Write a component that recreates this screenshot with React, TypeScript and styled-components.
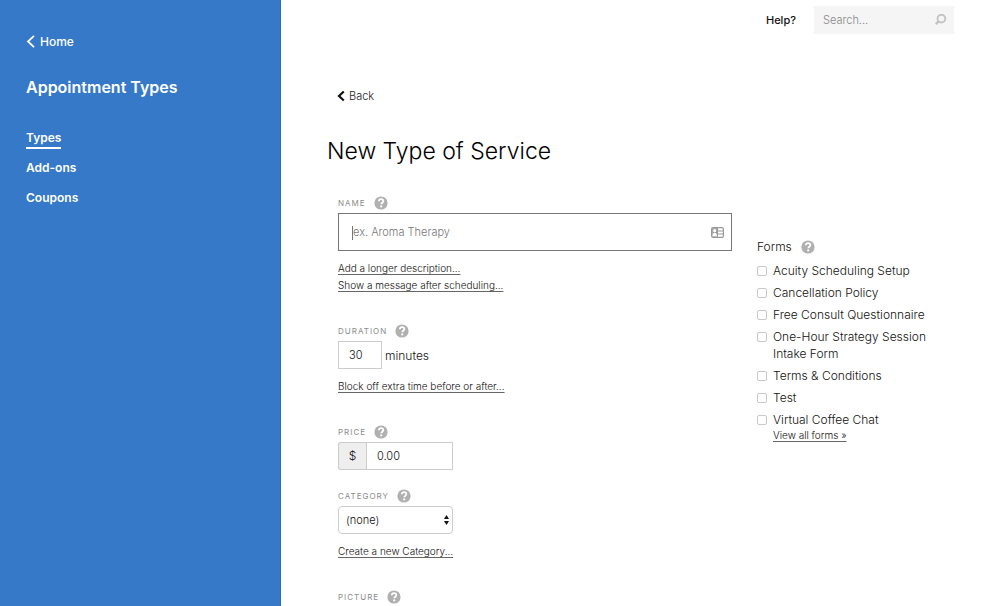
import React, { useId } from "react";
import styled, { createGlobalStyle } from "styled-components";

const Global = createGlobalStyle`
  *, *::before, *::after { box-sizing: border-box; }
  body {
    margin: 0;
    background: #fff;
    color: #111;
    font-family: Inter, "Liberation Sans", sans-serif;
    font-size: 12px;
    font-weight: 300;
    line-height: 17px;
  }
  input, select, button { font: inherit; color: inherit; }
`;

const Page = styled.div`
  display: flex;
  min-height: 100vh;
`;

const Sidebar = styled.aside`
  flex: 0 0 281px;
  padding: 33px 26px;
  background: #3579c8;
  border-right: 1px solid #2470c4;
  color: #fff;
`;

const HomeLink = styled.a`
  display: inline-flex;
  align-items: center;
  gap: 5px;
  color: #fff;
  font-size: 12px;
  font-weight: 500;
  text-decoration: none;
`;

const SidebarTitle = styled.h2`
  margin: 23px 0 30px;
  font-size: 16px;
  font-weight: 600;
  line-height: 24px;
`;

const Nav = styled.nav`
  display: flex;
  flex-direction: column;
  align-items: flex-start;
  gap: 10px;
`;

const NavLink = styled.a<{ $active?: boolean }>`
  height: 20px;
  border-bottom: 2px solid ${(p) => (p.$active ? "#fff" : "transparent")};
  color: #fff;
  font-size: 12px;
  font-weight: 600;
  line-height: 18px;
  text-decoration: none;
`;

const Main = styled.main`
  flex: 1;
  min-width: 0;
  padding: 6px 46px 0;
`;

const TopBar = styled.header`
  display: flex;
  justify-content: flex-end;
  align-items: center;
  gap: 18px;
`;

const HelpLink = styled.a`
  color: #111;
  font-weight: 500;
  font-size: 11px;
  text-decoration: none;
`;

const SearchBox = styled.div`
  display: flex;
  align-items: center;
  width: 140px;
  height: 28px;
  padding: 0 7px 0 9px;
  background: #f5f5f5;
`;

const SearchInput = styled.input`
  flex: 1;
  min-width: 0;
  padding: 0;
  border: 0;
  background: transparent;
  font-size: 11px;
  outline: none;
  &::placeholder { color: #888; opacity: 1; }
`;

const BackLink = styled.a`
  display: inline-flex;
  align-items: center;
  gap: 4px;
  margin: 54px 0 0 10px;
  color: #222;
  font-size: 11px;
  text-decoration: none;
`;

const Title = styled.h1`
  margin: 30px 0 29px;
  color: #000;
  font-size: 23px;
  font-weight: 300;
  line-height: 30px;
`;

const Form = styled.form`
  display: flex;
  gap: 25px;
  padding-left: 11px;
`;

const Fields = styled.div`
  flex: 1;
  min-width: 0;
`;

const Field = styled.section<{ $tight?: boolean }>`
  margin-bottom: ${(p) => (p.$tight ? 18 : 29)}px;
  &:last-child { margin-bottom: 0; }
`;

const LabelRow = styled.div`
  display: flex;
  align-items: center;
  gap: 8px;
  height: 16px;
  margin-bottom: 2px;
  ${Field}:last-child & { margin-bottom: 0; }
`;

const Label = styled.label`
  color: #8c8c8c;
  font-size: 8px;
  font-weight: 400;
  letter-spacing: 1px;
  line-height: 16px;
  text-transform: uppercase;
`;

const HelpButton = styled.button`
  display: block;
  width: 14px;
  height: 14px;
  padding: 0;
  border: 0;
  background: none;
  svg { display: block; }
`;

const NameBox = styled.div`
  position: relative;
  display: flex;
  align-items: center;
  height: 38px;
  padding: 0 7px 0 14px;
  border: 1px solid #777;
  &::before {
    content: "";
    position: absolute;
    left: 13px;
    top: 12px;
    width: 1px;
    height: 14px;
    background: #777;
  }
`;

const NameInput = styled.input`
  flex: 1;
  min-width: 0;
  padding: 0;
  border: 0;
  background: transparent;
  font-size: 11px;
  outline: none;
  &::placeholder { color: #777; opacity: 1; }
`;

const Links = styled.div`
  display: flex;
  flex-direction: column;
  align-items: flex-start;
  margin-top: 9px;
`;

const TextLink = styled.a`
  color: #111;
  font-size: 10px;
  line-height: 17px;
  text-decoration: underline;
  text-decoration-color: #666;
  text-underline-offset: 2px;
`;

const Row = styled.div`
  display: flex;
  align-items: center;
`;

const SmallInput = styled.input<{ $width: number }>`
  width: ${(p) => p.$width}px;
  height: 28px;
  padding: 0 10px;
  border: 1px solid #ccc;
  background: #fff;
  font-size: 11px;
`;

const Unit = styled.span`
  margin-left: 3px;
`;

const Currency = styled.span`
  width: 28px;
  height: 28px;
  border: 1px solid #ccc;
  border-right: 0;
  border-radius: 3px 0 0 3px;
  background: #eee;
  line-height: 26px;
  text-align: center;
`;

const SelectBox = styled.div`
  display: grid;
  align-items: center;
  width: 115px;
  svg {
    grid-area: 1 / 1;
    justify-self: end;
    margin-right: 4px;
    pointer-events: none;
  }
`;

const Select = styled.select`
  grid-area: 1 / 1;
  width: 100%;
  height: 28px;
  padding: 0 7px;
  border: 1px solid #ccc;
  border-radius: 4px;
  background: #fff;
  font-size: 11px;
  appearance: none;
`;

const FormsPanel = styled.aside`
  flex: 0 0 197px;
  padding: 43px 20px 0 0;
`;

const FormsHeading = styled.div`
  display: flex;
  align-items: center;
  gap: 9px;
  margin-bottom: 7px;
`;

const FormsTitle = styled.h3`
  margin: 0;
  font-size: 12px;
  font-weight: 300;
`;

const CheckList = styled.ul`
  display: flex;
  flex-direction: column;
  gap: 5px;
  margin: 0;
  padding: 0;
  list-style: none;
`;

const CheckLabel = styled.label`
  display: flex;
  align-items: flex-start;
  gap: 6px;
`;

const Checkbox = styled.input`
  flex: none;
  width: 10px;
  height: 10px;
  margin: 4px 0 0;
  border: 1px solid #c8c8c8;
  border-radius: 2px;
  background: #fff;
  appearance: none;
  &:checked { background: #3579c8; }
`;

const ViewAll = styled.div`
  padding-left: 16px;
  line-height: 14px;
  ${TextLink} { line-height: 14px; }
`;

function Help({ topic }: { topic: string }) {
  return (
    <HelpButton type="button" aria-label={`Help about ${topic}`}>
      <svg width="14" height="14" viewBox="0 0 14 14" aria-hidden="true">
        <circle cx="7" cy="7" r="6.6" fill="#b0b0b0" />
        <path
          d="M4.8 5.3C4.9 3.9 5.8 3.2 7 3.2s2.3.8 2.3 1.9c0 1.5-2 1.7-2 3.2"
          fill="none"
          stroke="#fff"
          strokeWidth="1.8"
        />
        <circle cx="7.2" cy="10.4" r="1.1" fill="#fff" />
      </svg>
    </HelpButton>
  );
}

interface FieldGroupProps {
  label: string;
  tight?: boolean;
  links?: string[];
  children?: (id: string) => React.ReactNode;
}

function FieldGroup({ label, tight, links, children }: FieldGroupProps) {
  const id = useId();
  return (
    <Field $tight={tight}>
      <LabelRow>
        <Label htmlFor={children ? id : undefined}>{label}</Label>
        <Help topic={label} />
      </LabelRow>
      {children?.(id)}
      {links && (
        <Links>
          {links.map((text) => (
            <TextLink key={text} href="#">{text}</TextLink>
          ))}
        </Links>
      )}
    </Field>
  );
}

const forms = [
  "Acuity Scheduling Setup",
  "Cancellation Policy",
  "Free Consult Questionnaire",
  "One-Hour Strategy Session Intake Form",
  "Terms & Conditions",
  "Test",
  "Virtual Coffee Chat",
];

export default function App() {
  return (
    <Page>
      <Global />
      <Sidebar>
        <HomeLink href="#">
          <svg width="9" height="13" viewBox="0 0 9 13" fill="none" stroke="#fff" strokeWidth="1.8" aria-hidden="true">
            <path d="M8 .8 2 6.5l6 5.7" />
          </svg>
          Home
        </HomeLink>
        <SidebarTitle>Appointment Types</SidebarTitle>
        <Nav>
          <NavLink href="#" $active>Types</NavLink>
          <NavLink href="#">Add-ons</NavLink>
          <NavLink href="#">Coupons</NavLink>
        </Nav>
      </Sidebar>
      <Main>
        <TopBar>
          <HelpLink href="#">Help?</HelpLink>
          <SearchBox>
            <SearchInput type="text" placeholder="Search..." aria-label="Search" />
            <svg width="12" height="12" viewBox="0 0 12 12" fill="none" stroke="#c4c4c4" aria-hidden="true">
              <circle cx="6.4" cy="4.6" r="3.9" strokeWidth="1.9" />
              <path d="M3.8 7.2 .9 10.1" strokeWidth="2.6" />
            </svg>
          </SearchBox>
        </TopBar>
        <BackLink href="#">
          <svg width="8" height="11" viewBox="0 0 8 11" fill="none" stroke="#111" strokeWidth="2.2" aria-hidden="true">
            <path d="M6.8 .5 2 5l4.8 4.5" />
          </svg>
          Back
        </BackLink>
        <Title>New Type of Service</Title>
        <Form>
          <Fields>
            <FieldGroup label="Name" links={["Add a longer description...", "Show a message after scheduling..."]}>
              {(id) => (
                <NameBox>
                  <NameInput id={id} type="text" placeholder="ex. Aroma Therapy" />
                  <svg width="13" height="11" viewBox="0 0 13 11" fill="none" stroke="#999" aria-hidden="true">
                    <rect x=".6" y=".6" width="11.8" height="9.8" rx="1.4" strokeWidth="1.2" />
                    <path d="M6.5 1v9M6.5 4h6M6.5 7h6" />
                    <path d="M1.2 1.2h5v8.6h-5z" fill="#999" stroke="none" />
                    <circle cx="3.7" cy="3.7" r="1.6" fill="#fff" stroke="none" />
                    <path d="M1.4 9.2c0-4.6 4.6-4.6 4.6 0z" fill="#fff" stroke="none" />
                  </svg>
                </NameBox>
              )}
            </FieldGroup>
            <FieldGroup label="Duration" links={["Block off extra time before or after..."]}>
              {(id) => (
                <Row>
                  <SmallInput id={id} type="text" defaultValue="30" $width={44} />
                  <Unit>minutes</Unit>
                </Row>
              )}
            </FieldGroup>
            <FieldGroup label="Price" tight>
              {(id) => (
                <Row>
                  <Currency>$</Currency>
                  <SmallInput id={id} type="text" defaultValue="0.00" $width={87} />
                </Row>
              )}
            </FieldGroup>
            <FieldGroup label="Category" links={["Create a new Category..."]}>
              {(id) => (
                <SelectBox>
                  <Select id={id} defaultValue="none">
                    <option value="none">(none)</option>
                  </Select>
                  <svg width="5" height="10" viewBox="0 0 5 10" fill="#111" aria-hidden="true">
                    <path d="M2.5 0 5 4H0zM2.5 10 0 6h5z" />
                  </svg>
                </SelectBox>
              )}
            </FieldGroup>
            <FieldGroup label="Picture" />
          </Fields>
          <FormsPanel>
            <FormsHeading>
              <FormsTitle>Forms</FormsTitle>
              <Help topic="Forms" />
            </FormsHeading>
            <CheckList>
              {forms.map((name) => (
                <li key={name}>
                  <CheckLabel>
                    <Checkbox type="checkbox" />
                    <span>{name}</span>
                  </CheckLabel>
                </li>
              ))}
            </CheckList>
            <ViewAll>
              <TextLink href="#">View all forms »</TextLink>
            </ViewAll>
          </FormsPanel>
        </Form>
      </Main>
    </Page>
  );
}
